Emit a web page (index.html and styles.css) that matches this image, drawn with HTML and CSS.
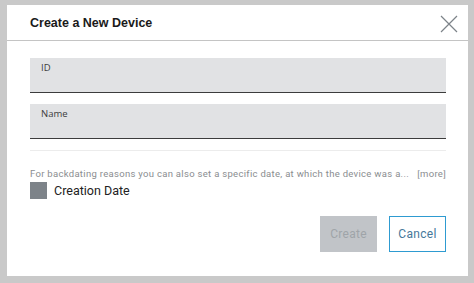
FILE: index.html
```html
<!doctype html>
<html lang="en">
<head>
	<meta charset="UTF-8">
	<title>Create a New Device</title>
	<link rel="stylesheet" href="styles.css">
</head>
<body>
<div class="dialog">
	<div class="header">
		<span class="title">Create a New Device</span>
		<svg class="close" width="18" height="18" viewBox="0 0 18 18">
			<path d="M1 1 L17 17 M17 1 L1 17" stroke="#7d8389" stroke-width="1.2" fill="none"/>
		</svg>
	</div>
	<div class="body">
		<div class="field"><label>ID</label></div>
		<div class="field"><label>Name</label></div>
		<div class="sep"></div>
		<div class="hint">
			<span>For backdating reasons you can also set a specific date, at which the device was a...</span>
			<span>[more]</span>
		</div>
		<div class="check">
			<span class="box"></span>
			<span>Creation Date</span>
		</div>
		<div class="actions">
			<button type="button" class="btn create">Create</button>
			<button type="button" class="btn cancel">Cancel</button>
		</div>
	</div>
</div>
</body>
</html>
```

FILE: styles.css
```css
html, body{
	margin: 0;
	height: 100%;
}
body{
	background: #c9c9c9;
	padding: 5px 6px 7px 7px;
	box-sizing: border-box;
	font-family: "Roboto", "Liberation Sans", sans-serif;
}
.dialog{
	background: #fff;
	height: 100%;
	display: flex;
	flex-direction: column;
}
.header{
	height: 35px;
	border-bottom: 1px solid #c4c4c4;
	display: flex;
	align-items: center;
	justify-content: space-between;
	padding: 0 10px 0 23px;
}
.title{
	font-family: "Liberation Sans", sans-serif;
	font-size: 12.5px;
	font-weight: bold;
	color: #1a1a1a;
}
.close{
	margin-top: 2px;
}
.body{
	padding: 17px 22px 0 23px;
}
.field{
	background: #e1e2e4;
	border-bottom: 1px solid #3c3c3c;
	padding: 3px 11px 0;
	margin-bottom: 11px;
	height: 31px;
}
.field label{
	font-family: "Open Sans", sans-serif;
	font-size: 9.5px;
	color: #3c3c3c;
	display: block;
}
.sep{
	height: 1px;
	background: #ececec;
}
.hint{
	margin-top: 16px;
	display: flex;
	justify-content: space-between;
	white-space: nowrap;
	font-size: 9.5px;
	line-height: 14px;
	color: #8a8d90;
	letter-spacing: 0.3px;
}
.check{
	display: flex;
	align-items: center;
	gap: 7px;
	margin-top: 1px;
	font-size: 12.5px;
	color: #222;
}
.box{
	width: 17px;
	height: 17px;
	background: #7d8389;
}
.actions{
	display: flex;
	justify-content: flex-end;
	gap: 12px;
	margin-top: 17px;
}
.btn{
	width: 57px;
	height: 36px;
	font-family: "Roboto", "Liberation Sans", sans-serif;
	font-size: 12px;
	padding: 0;
	letter-spacing: 0.3px;
}
.create{
	background: #c1c4c8;
	border: none;
	color: #9fa4a9;
}
.cancel{
	background: #fff;
	border: 1px solid #2e9bd1;
	color: #46789a;
}
```
